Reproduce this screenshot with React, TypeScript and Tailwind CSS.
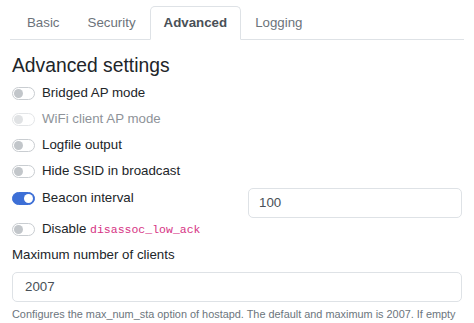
import { useState } from 'react'

const tabs = ['Basic', 'Security', 'Advanced', 'Logging']

function Switch({ checked, disabled }: { checked?: boolean; disabled?: boolean }) {
  return (
    <span
      className={`relative inline-block w-[23px] h-[13px] rounded-full border shrink-0 ${
        checked ? 'bg-[#3d6fd6] border-[#3d6fd6]' : 'bg-white border-[#c9cdd1]'
      } ${disabled ? 'opacity-50' : ''}`}
    >
      <span
        className={`absolute top-[1px] w-[9px] h-[9px] rounded-full ${
          checked ? 'right-[1px] bg-white' : 'left-[1px] bg-[#c2c6ca]'
        }`}
      />
    </span>
  )
}

function SwitchRow({
  label,
  checked,
  disabled,
  className = 'h-[26px]',
  children,
}: {
  label?: string
  checked?: boolean
  disabled?: boolean
  className?: string
  children?: React.ReactNode
}) {
  return (
    <div className={`flex items-center gap-[7px] ${className}`}>
      <Switch checked={checked} disabled={disabled} />
      <span className={disabled ? 'text-[#8e9399]' : 'text-[#212529]'}>
        {children ?? label}
      </span>
    </div>
  )
}

export default function App() {
  const [active] = useState('Advanced')

  return (
    <div
      className="w-[474px] h-[323px] overflow-hidden bg-white text-[13.3px] text-[#212529]"
      style={{ fontFamily: '"Liberation Sans", Arial, sans-serif' }}
    >
      <nav className="mt-[6px] mx-[10px] flex border-b border-[#dee2e6]">
        <div className="w-[3px]" />
        {tabs.map((t) => (
          <div
            key={t}
            className={`h-[34px] -mb-px px-[13px] flex items-center border rounded-t-[5px] ${
              t === active
                ? 'border-[#dee2e6] border-b-white bg-white font-bold text-[#495057]'
                : 'border-transparent text-[#6c737a]'
            }`}
          >
            {t}
          </div>
        ))}
      </nav>

      <div className="px-[12px]">
        <h2 className="mt-[12px] text-[19.3px] leading-[28px] font-normal">Advanced settings</h2>

        <SwitchRow label="Bridged AP mode" />
        <SwitchRow label="WiFi client AP mode" disabled />
        <SwitchRow label="Logfile output" />
        <SwitchRow label="Hide SSID in broadcast" />

        <div className="grid grid-cols-2 gap-x-[22px]">
          <SwitchRow label="Beacon interval" checked className="h-[28px]" />
          <div className="mt-[4px] h-[30px] px-[10px] flex items-center border border-[#dee2e6] rounded-[5px] text-[#495057]">
            100
          </div>
        </div>

        <SwitchRow className="h-[22px]">
          Disable{' '}
          <code
            className="text-[11.5px] text-[#d63384]"
            style={{ fontFamily: '"Liberation Mono", monospace' }}
          >
            disassoc_low_ack
          </code>
        </SwitchRow>

        <div className="mt-[5px] h-[20px] flex items-center">Maximum number of clients</div>
        <div className="mt-[7px] h-[30px] px-[12px] flex items-center border border-[#dee2e6] rounded-[5px] text-[#495057]">
          2007
        </div>
        <p className="mt-[4px] max-w-[446px] text-[10.9px] leading-[16px] text-[#6c757d]">
          Configures the max_num_sta option of hostapd. The default and maximum is 2007. If empty
          or 0, the default applies.
        </p>
      </div>
    </div>
  )
}
